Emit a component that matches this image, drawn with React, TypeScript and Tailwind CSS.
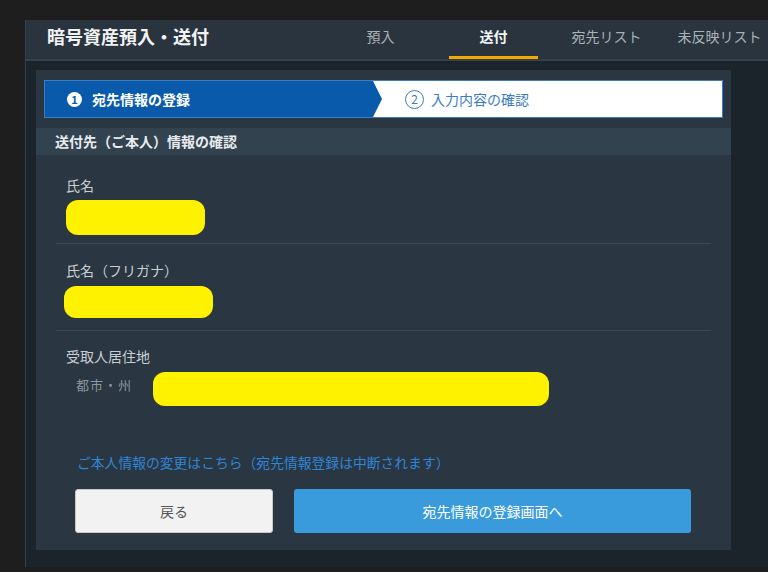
const tabs = ['預入', '送付', '宛先リスト', '未反映リスト'];

const font = { fontFamily: '"Noto Sans CJK JP", "Noto Sans", sans-serif' };

function Redacted({ className }: { className: string }) {
  return <div className={`bg-[#fff200] rounded-[12px] ${className}`} />;
}

export default function App() {
  return (
    <div style={font} className="h-[572px] overflow-hidden bg-[#1e1e1e] pt-[20px] pl-[25px]">
      <div className="h-[547px] border-l border-[#34424e] bg-[#1b242b]">
        {/* Header */}
        <div className="flex h-[39px] items-stretch bg-[#29343e]">
          <div className="flex w-[298px] shrink-0 items-center pb-[7px] pl-[21px] text-[18px] font-bold text-[#f0f2f4]">
            暗号資産預入・送付
          </div>
          {tabs.map((tab) => {
            const active = tab === '送付';
            return (
              <div
                key={tab}
                className={`relative flex w-[113px] shrink-0 items-center justify-center whitespace-nowrap pb-[7px] text-[14px] ${
                  active ? 'font-bold text-[#f4f5f6]' : 'text-[#a9b1b8]'
                }`}
              >
                {tab}
                {active && <div className="absolute bottom-0 left-[12px] right-[12px] h-[3px] bg-[#f5a800]" />}
              </div>
            );
          })}
        </div>
        <div className="h-[2px] bg-[#34414c]" />

        {/* Body */}
        <div className="pt-[9px] pl-[10px]">
          <div className="h-[480px] w-[695px] bg-[#2a3642] pt-[10px]">
            {/* Stepper */}
            <div className="mx-2 flex h-[38px] w-[679px] border border-[#3b7dc0] bg-white">
              <div className="flex w-[337px] shrink-0 items-center gap-[10px] bg-[#0a5aab] pl-[22px] text-[14px] font-bold text-white [clip-path:polygon(0_0,calc(100%-9px)_0,100%_50%,calc(100%-9px)_100%,0_100%)]">
                <span className="flex h-[15px] w-[15px] items-center justify-center rounded-full bg-white text-[11px] font-bold leading-none text-[#0a5aab]">
                  1
                </span>
                宛先情報の登録
              </div>
              <div className="flex items-center gap-[7px] pl-[23px] text-[14px] text-[#3b7dc0]">
                <span className="flex h-[19px] w-[19px] items-center justify-center rounded-full border-[1.5px] border-[#3b7dc0] text-[12px] leading-none">
                  2
                </span>
                入力内容の確認
              </div>
            </div>

            {/* Section header */}
            <div className="mt-[10px] flex h-[27px] items-center bg-[#33424f] pl-[19px] text-[14px] font-bold text-[#e8ebee]">
              送付先（ご本人）情報の確認
            </div>

            {/* Rows */}
            <div className="mx-[20px]">
              <div className="border-b border-[#36495a] pt-[20px] pb-[8px] pl-[10px]">
                <div className="h-[20px] text-[14px] leading-[20px] text-[#c9ced3]">氏名</div>
                <Redacted className="mt-[5px] h-[35px] w-[139px]" />
              </div>
              <div className="border-b border-[#36495a] pt-[16px] pb-[12px] pl-[8px]">
                <div className="h-[20px] pl-[2px] text-[14px] leading-[20px] text-[#c9ced3]">氏名（フリガナ）</div>
                <Redacted className="mt-[6px] h-[32px] w-[149px]" />
              </div>
              <div className="pt-[15px] pl-[10px]">
                <div className="h-[20px] text-[14px] leading-[20px] text-[#c9ced3]">受取人居住地</div>
                <div className="mt-[6px] flex items-center">
                  <div className="w-[87px] shrink-0 pl-[10px] pb-[8px] text-[13px] tracking-[1px] text-[#8c959d]">都市・州</div>
                  <Redacted className="h-[34px] w-[396px]" />
                </div>
              </div>
            </div>

            {/* Link */}
            <div className="mt-[46px] pl-[41px] text-[13.8px] leading-[20px] text-[#2f86d6]">
              ご本人情報の変更はこちら（宛先情報登録は中断されます）
            </div>

            {/* Buttons */}
            <div className="mt-[17px] flex gap-[21px] pl-[39px]">
              <button className="flex h-[44px] w-[198px] items-center justify-center rounded-[3px] border border-[#c8c8c8] bg-[#f2f2f2] text-[14px] text-[#555]">
                戻る
              </button>
              <button className="flex h-[44px] w-[397px] items-center justify-center rounded-[3px] bg-[#3a9bdc] text-[14px] text-white">
                宛先情報の登録画面へ
              </button>
            </div>
          </div>
        </div>
      </div>
    </div>
  );
}
